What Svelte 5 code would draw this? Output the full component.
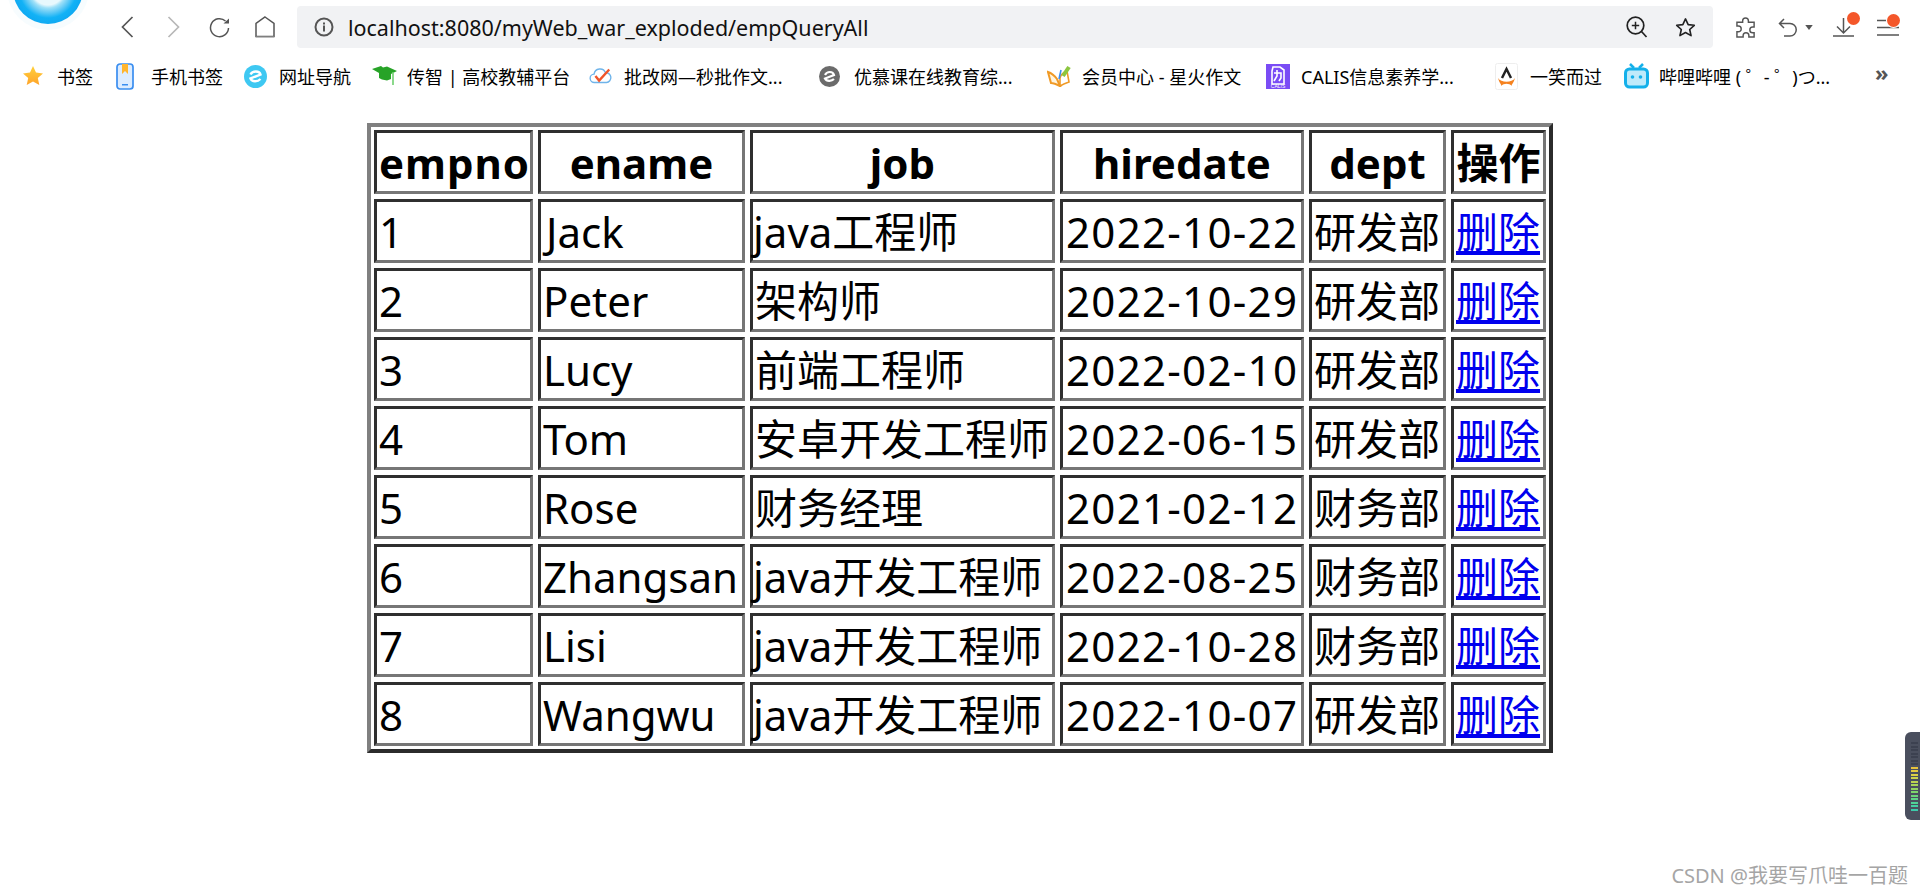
<script>
  const bookmarks = [
    { id: 'star', w: 94, t: '书签' },
    { id: 'phone', w: 128, t: '手机书签' },
    { id: 'e', w: 128, t: '网址导航' },
    { id: 'cap', w: 217, t: '传智 | 高校教辅平台' },
    { id: 'cloud', w: 230, t: '批改网—秒批作文...' },
    { id: 'mooc', w: 228, t: '优慕课在线教育综...' },
    { id: 'book', w: 219, t: '会员中心 - 星火作文' },
    { id: 'calis', w: 229, t: 'CALIS信息素养学...' },
    { id: 'a', w: 129, t: '一笑而过' },
    { id: 'bili', w: 258, t: '哔哩哔哩 ( ゜- ゜)つ...' }
  ];
  const widths = [159, 207, 305, 244, 137, 95];
  const heads = ['empno', 'ename', 'job', 'hiredate', 'dept', '操作'];
  const rows = [
    [1, 'Jack', 'java工程师', '2022-10-22', '研发部'],
    [2, 'Peter', '架构师', '2022-10-29', '研发部'],
    [3, 'Lucy', '前端工程师', '2022-02-10', '研发部'],
    [4, 'Tom', '安卓开发工程师', '2022-06-15', '研发部'],
    [5, 'Rose', '财务经理', '2021-02-12', '财务部'],
    [6, 'Zhangsan', 'java开发工程师', '2022-08-25', '财务部'],
    [7, 'Lisi', 'java开发工程师', '2022-10-28', '财务部'],
    [8, 'Wangwu', 'java开发工程师', '2022-10-07', '研发部']
  ];
  const meter = ['#3c4150','#3c4150','#3c4150','#3c4150','#3c4150','#3c4150','#3c4150','#e6c23c','#e3c83f','#dccf45','#cdd24a','#bcd450','#a8d558','#93d560','#7dd56c','#6cd47a','#5ed488','#50d296','#45cfa2','#3ccbaa'];
</script>

<div class="page">
  <header class="chrome">
    <div class="logo"></div>
    <div class="toolbar">
      <button class="nav" aria-label="back">
        <svg width="13" height="22" viewBox="0 0 13 22"><path d="M11.500 1 1.500 11l10 10" fill="none" stroke="#555" stroke-width="1.700"/></svg>
      </button>
      <button class="nav" aria-label="forward">
        <svg width="13" height="22" viewBox="0 0 13 22"><path d="m1.500 1 10 10-10 10" fill="none" stroke="#b8b8b8" stroke-width="1.700"/></svg>
      </button>
      <button class="nav" aria-label="reload">
        <svg width="21" height="21" viewBox="0 0 21 21"><path d="M16.500 4A9 9 0 1 0 19.500 11" fill="none" stroke="#555" stroke-width="1.500"/><path d="M14.500 6.500h5.500V1.500z" fill="#555"/></svg>
      </button>
      <button class="nav" aria-label="home">
        <svg width="20" height="22" viewBox="0 0 20 22"><path d="M10 1 19 7.500V20.500H1V7.500z" fill="none" stroke="#555" stroke-width="1.500"/><path d="M1 21h18" stroke="#aaa" stroke-width="1"/></svg>
      </button>
      <div class="address">
        <svg class="info" width="20" height="20" viewBox="0 0 20 20"><circle cx="10" cy="10" r="8.500" fill="none" stroke="#555" stroke-width="2"/><rect x="9" y="8.500" width="2" height="6" fill="#555"/><rect x="9" y="5.500" width="2" height="2" fill="#555"/></svg>
        <span class="url">localhost:8080/myWeb_war_exploded/empQueryAll</span>
        <svg class="zoomi" width="22" height="22" viewBox="0 0 22 22"><circle cx="9.500" cy="9.500" r="8.300" fill="none" stroke="#222" stroke-width="1.700"/><path d="M9.500 5.800v7.400M5.800 9.500h7.400" stroke="#222" stroke-width="1.500"/><path d="m15.500 15.500 5 5.500" stroke="#222" stroke-width="1.700"/></svg>
        <svg class="fav" width="21" height="21" viewBox="0 0 22 22"><path d="m11 2 2.800 6 6.400.7-4.800 4.400 1.400 6.400L11 16.300 5.200 19.500l1.400-6.400L1.800 8.700 8.200 8z" fill="none" stroke="#222" stroke-width="1.700" stroke-linejoin="round"/></svg>
      </div>
      <div class="tools">
        <svg class="ext" width="22" height="21" viewBox="0 0 23 22"><path d="M8 4a3 3 0 0 1 6 0v1.500h6v5h-1.500a3 3 0 0 0 0 6H20V21h-5.500v-1.500a3 3 0 0 0-6 0V21H2v-5.500h1.500a3 3 0 0 0 0-6H2V5.500h6z" fill="none" stroke="#555" stroke-width="1.500"/></svg>
        <svg class="undo" width="20" height="19" viewBox="0 0 20 19"><path d="M6 1 1.500 5.500 6 10M2 5.500h10a6 6 0 0 1 0 12.500H6" fill="none" stroke="#555" stroke-width="1.500"/></svg>
        <svg class="caret" width="8" height="5" viewBox="0 0 9 6"><path d="M0 0h9L4.500 6z" fill="#555"/></svg>
        <span class="badged dl">
          <svg width="21" height="20" viewBox="0 0 21 20"><path d="M10.500 1v14.500M4 9.500l6.500 6.500L17 9.500M0 19h21" fill="none" stroke="#555" stroke-width="1.500"/></svg>
          <i class="dot"></i>
        </span>
        <span class="badged menu">
          <svg width="22" height="17" viewBox="0 0 22 17"><path d="M0 1.500h11M0 8.500h22M0 16h22" fill="none" stroke="#555" stroke-width="1.500"/></svg>
          <i class="dot"></i>
        </span>
      </div>
    </div>

    <nav class="bookmarks">
      {#each bookmarks as b}
        <div class="bm" style="width:{b.w}px">
          <span class="bm-icon">
            {#if b.id === 'star'}
              <svg width="22" height="22" viewBox="0 0 22 22"><defs><linearGradient id="gs" x1="0" y1="0" x2="0" y2="1"><stop offset="0" stop-color="#ffd03a"/><stop offset="1" stop-color="#ffa42a"/></linearGradient></defs><path d="m11 1 3 6.600 7 .8-5.200 4.700 1.500 7L11 16.500 4.700 20l1.500-7L1 8.400l7-.8z" fill="url(#gs)" stroke-linejoin="round"/></svg>
            {:else if b.id === 'phone'}
              <svg width="18" height="27" viewBox="0 0 18 27"><rect x="1" y="1" width="16" height="25" rx="3" fill="#dcecff" stroke="#3a8ef0" stroke-width="1.700"/><path d="M6 1h6v10l-3-3-3 3z" fill="#ffb52e"/><rect x="6" y="21" width="6" height="1.500" fill="#3a8ef0"/></svg>
            {:else if b.id === 'e'}
              <svg width="23" height="23" viewBox="0 0 23 23"><circle cx="11.500" cy="11.500" r="11.500" fill="#3ec8f2"/><path d="M6.500 9.500c2-4 9-4 10 0l-10 4c1.500 3.500 7 3.500 10 .5" fill="none" stroke="#fff" stroke-width="2.400"/></svg>
            {:else if b.id === 'cap'}
              <svg width="25" height="20" viewBox="0 0 25 20"><path d="M0 3 9 0l2 1.500L15 .5 25 5l-6 3v5l-4 1.500-5-1-3-1.500V7z" fill="#27a327"/><path d="M21 6v13" stroke="#6fd06f" stroke-width="1.600"/></svg>
            {:else if b.id === 'cloud'}
              <svg width="23" height="20" viewBox="0 0 25 20"><path d="M6 17a4.500 4.500 0 0 1-.5-9A6.500 6.500 0 0 1 18 6.500 5 5 0 0 1 19 17z" fill="#fff" stroke="#6fb4ea" stroke-width="1.500"/><path d="m7 10 4 5 11-12" fill="none" stroke="#f0552a" stroke-width="2.600"/></svg>
            {:else if b.id === 'mooc'}
              <svg width="21" height="23" viewBox="0 0 21 23"><circle cx="10.500" cy="11.500" r="10.500" fill="#6b6b6b"/><path d="M6 10c2-4 8-4 9 0l-9 3.500c1.500 3 6.500 3 9 .5" fill="none" stroke="#fff" stroke-width="2.200"/></svg>
            {:else if b.id === 'book'}
              <svg width="24" height="22" viewBox="0 0 24 22"><path d="M1 7c3 1 6 3 9 7l3 7c-4-2-7-3-9-3z" fill="#fff5e0" stroke="#f09a26" stroke-width="2"/><path d="M13 21c3-2 6-3 9-4L20 6c-3 1-6 3-7 7z" fill="#fff" stroke="#f09a26" stroke-width="1.600"/><path d="m12 14 2-9" stroke="#3a8ef0" stroke-width="1.600"/><path d="m16 11 6-9" stroke="#8cc63f" stroke-width="4"/></svg>
            {:else if b.id === 'calis'}
              <svg width="24" height="25" viewBox="0 0 24 25"><rect width="24" height="25" fill="#7a4cf5"/><path d="M7 3h7l4 3v14H6V7z" fill="none" stroke="#fff" stroke-width="1.600"/><path d="M8 9h7v5l-2 3M11 6v6l-3 5" fill="none" stroke="#fff" stroke-width="1.600"/><text x="12" y="24" font-size="5" fill="#fff" text-anchor="middle" font-family="Liberation Sans, sans-serif">CALIS</text></svg>
            {:else if b.id === 'a'}
              <svg width="23" height="27" viewBox="0 0 23 27"><rect x=".5" y=".5" width="22" height="26" rx="2" fill="#fff" stroke="#eee"/><path d="m7 15 4.500-9 4.500 9" fill="none" stroke="#222" stroke-width="2.500"/><path d="M3 15c3 5 14 5 17 0-2 7-4 6-3 8-3-3-8-3-11 0 1-2-1-1-3-8z" fill="#f5821f"/></svg>
            {:else if b.id === 'bili'}
              <svg width="25" height="26" viewBox="0 0 25 26"><path d="m6 1 4 4m9-4-4 4" stroke="#14b0ea" stroke-width="2.500"/><rect x="1.500" y="6" width="22" height="18" rx="4" fill="#bfeafa" stroke="#14b0ea" stroke-width="3"/><circle cx="8.500" cy="14" r="1.800" fill="#14b0ea"/><circle cx="16.500" cy="14" r="1.800" fill="#14b0ea"/></svg>
            {/if}
          </span>
          <span class="bm-text">{b.t}</span>
        </div>
      {/each}
      <span class="more">»</span>
    </nav>
  </header>

  <main>
    <div class="frame">
      <table>
        <colgroup>
          {#each widths as w}<col style="width:{w}px" />{/each}
        </colgroup>
        <thead>
          <tr>{#each heads as h}<th class:wide={h === 'empno'}>{h}</th>{/each}</tr>
        </thead>
        <tbody>
          {#each rows as r}
            <tr>
              <td>{r[0]}</td>
              <td class:nudge={r[1] === 'Jack'}>{r[1]}</td>
              <td class:flush={r[2].startsWith('java')}>{r[2]}</td>
              <td class="date">{r[3]}</td>
              <td>{r[4]}</td>
              <td><a href="#del">删除</a></td>
            </tr>
          {/each}
        </tbody>
      </table>
    </div>
  </main>

  <div class="meter">
    {#each meter as c}<span style="background:{c}"></span>{/each}
  </div>
  <div class="mark">CSDN @我要写爪哇一百题</div>
</div>

<style>
  :global(body) { margin: 0; background: #fff; }
  .page {
    position: relative;
    height: 895px;
    overflow: hidden;
    font-family: "Noto Sans", "Noto Sans CJK SC", sans-serif;
    color: #000;
  }
  .chrome { position: relative; height: 96px; }
  .logo {
    position: absolute;
    left: 13px;
    top: -46px;
    width: 70px;
    height: 70px;
    border-radius: 50%;
    background: radial-gradient(circle at 50% 50%, #e8f8fd 0 16px, #9fe0f8 19px, #5cc8f6 24px, #12b2f6 29px, #0fa9f2 35px);
    box-shadow: 0 0 0 6px rgba(225, 245, 250, 0.25);
  }
  .toolbar {
    display: flex;
    align-items: center;
    height: 42px;
    padding: 6px 0 0 104px;
  }
  .nav {
    width: 46px;
    height: 42px;
    padding: 0;
    border: 0;
    background: none;
    display: flex;
    align-items: center;
    justify-content: center;
  }
  .address {
    width: 1416px;
    height: 42px;
    margin-left: 9px;
    box-sizing: border-box;
    padding: 0 17px;
    background: #f1f2f4;
    border-radius: 4px;
    display: flex;
    align-items: center;
  }
  .info { flex: none; }
  .url {
    flex: 1;
    margin-left: 14px;
    font-size: 21.500px;
    color: #111;
    white-space: nowrap;
  }
  .zoomi { margin-right: 27px; }
  .tools {
    display: flex;
    align-items: center;
    margin-left: 22px;
  }
  .undo { margin-left: 21px; }
  .caret { margin-left: 7px; }
  .badged { position: relative; display: flex; }
  .dl { margin-left: 20px; }
  .menu { margin-left: 23px; }
  .dot {
    position: absolute;
    width: 13px;
    height: 13px;
    border-radius: 50%;
    background: #f4572a;
    box-shadow: 0 0 0 1px #fff;
    top: -5px;
    right: -6px;
  }
  .menu .dot { right: -1px; top: -5px; }
  .bookmarks {
    display: flex;
    align-items: center;
    height: 30px;
    margin-top: 13px;
    padding-left: 22px;
    position: relative;
  }
  .bm { display: flex; align-items: center; flex: none; white-space: nowrap; }
  .bm-icon {
    width: 35px;
    flex: none;
    display: flex;
    align-items: center;
  }
  .bm-text { font-size: 18px; color: #000; }
  .more { position: absolute; left: 1875px; top: -4px; font-size: 22px; font-weight: 700; color: #555; }
  main { display: flex; justify-content: center; padding-top: 27px; }
  .frame {
    width: 1186px;
    height: 630px;
    box-sizing: border-box;
    border: 4px solid;
    border-color: #808080 #2b2b2b #2b2b2b #808080;
    overflow: hidden;
  }
  table {
    margin: -2px;
    border-collapse: separate;
    border-spacing: 5px;
    table-layout: fixed;
    width: 1180px;
    font-size: 42px;
  }
  th, td {
    height: 64px;
    box-sizing: border-box;
    border: 3px solid;
    border-color: #2f2f2f #767676 #767676 #2f2f2f;
    padding: 1px 2px 0;
    line-height: 54px;
    white-space: nowrap;
    overflow: visible;
  }
  th { text-align: center; font-weight: 700; }
  td { text-align: left; font-weight: 400; }
  .wide { letter-spacing: 1px; }
  .flush { padding-left: 0; }
  .nudge { padding-left: 5px; }
  .date { padding-left: 3px; letter-spacing: 1.300px; }
  a { color: #0000ee; }
  .meter {
    position: absolute;
    right: 0;
    top: 732px;
    width: 15px;
    height: 88px;
    box-sizing: border-box;
    padding: 10px 2px 0 6px;
    border-radius: 6px 0 0 6px;
    background: #4a4f5e;
    display: flex;
    flex-direction: column;
    gap: 1.500px;
  }
  .meter span { display: block; height: 2px; flex: none; }
  .mark {
    position: absolute;
    right: 12px;
    bottom: 5px;
    font-size: 20px;
    line-height: 28px;
    color: #a5a5a5;
    white-space: nowrap;
  }
</style>
